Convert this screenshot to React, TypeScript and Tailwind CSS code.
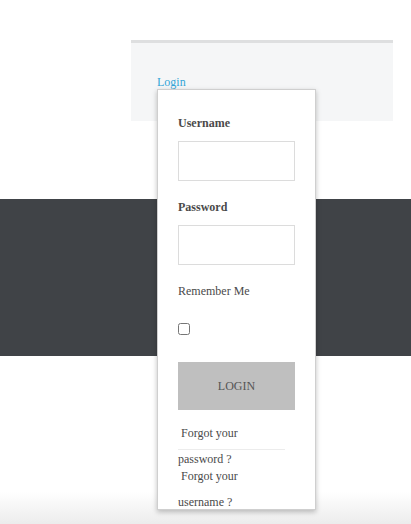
import { useState } from 'react';

function LoginDropdown() {
  const [remember, setRemember] = useState(false);

  return (
    <div className="absolute left-[157px] top-[89px] w-[159px] h-[421px] bg-white border border-[#cfcfcf] shadow-[0_2px_5px_rgba(0,0,0,0.25)] pl-[20px] pr-[20px] pt-[26px] text-[12px] text-[#4a4a4a] font-['Liberation_Serif','Times_New_Roman',serif]">
      <label className="block h-[14px] leading-[14px] font-bold">Username</label>
      <input className="block mt-[11px] w-[117px] h-[40px] border border-[#dcdcdc] bg-white outline-none" type="text" />

      <label className="block mt-[19px] h-[14px] leading-[14px] font-bold">Password</label>
      <input className="block mt-[11px] w-[117px] h-[40px] border border-[#dcdcdc] bg-white outline-none" type="password" />

      <div className="mt-[19px] h-[14px] leading-[14px]">Remember Me</div>
      <input
        type="checkbox"
        checked={remember}
        onChange={() => setRemember(!remember)}
        className="block mt-[25px] w-[12px] h-[12px] m-0"
      />

      <button className="block mt-[27px] w-[117px] h-[48px] bg-[#bfbfbf] text-[#555] text-[12px] leading-[48px] text-center">
        LOGIN
      </button>

      {/* Forgot links */}
      <div className="mt-[16px] pl-[3px] h-[14px] leading-[14px]">Forgot your</div>
      <div className="mt-[9px] w-[107px] h-px bg-[#ececec]" />
      <div className="mt-[2px] h-[14px] leading-[14px]">password ?</div>
      <div className="mt-[3px] pl-[3px] h-[14px] leading-[14px]">Forgot your</div>
      <div className="mt-[12px] h-[14px] leading-[14px]">username ?</div>
    </div>
  );
}

export default function App() {
  return (
    <div className="relative w-[411px] h-[524px] bg-white overflow-hidden font-['Liberation_Serif','Times_New_Roman',serif]">
      <div className="pt-[40px]">
        {/* Header panel */}
        <div className="ml-[131px] w-[262px] h-[81px] bg-[#f5f6f7] border-t-[3px] border-[#dedfe0] pl-[26px] pt-[32px]">
          <a href="#" className="block h-[14px] leading-[14px] text-[12px] text-[#34a5d6]">
            Login
          </a>
        </div>

        {/* Dark band */}
        <div className="mt-[78px] h-[157px] bg-[#404347]" />
      </div>

      {/* Bottom fade */}
      <div className="absolute left-0 right-0 bottom-0 h-[32px] bg-gradient-to-b from-white to-[#ececec]" />

      <LoginDropdown />
    </div>
  );
}
